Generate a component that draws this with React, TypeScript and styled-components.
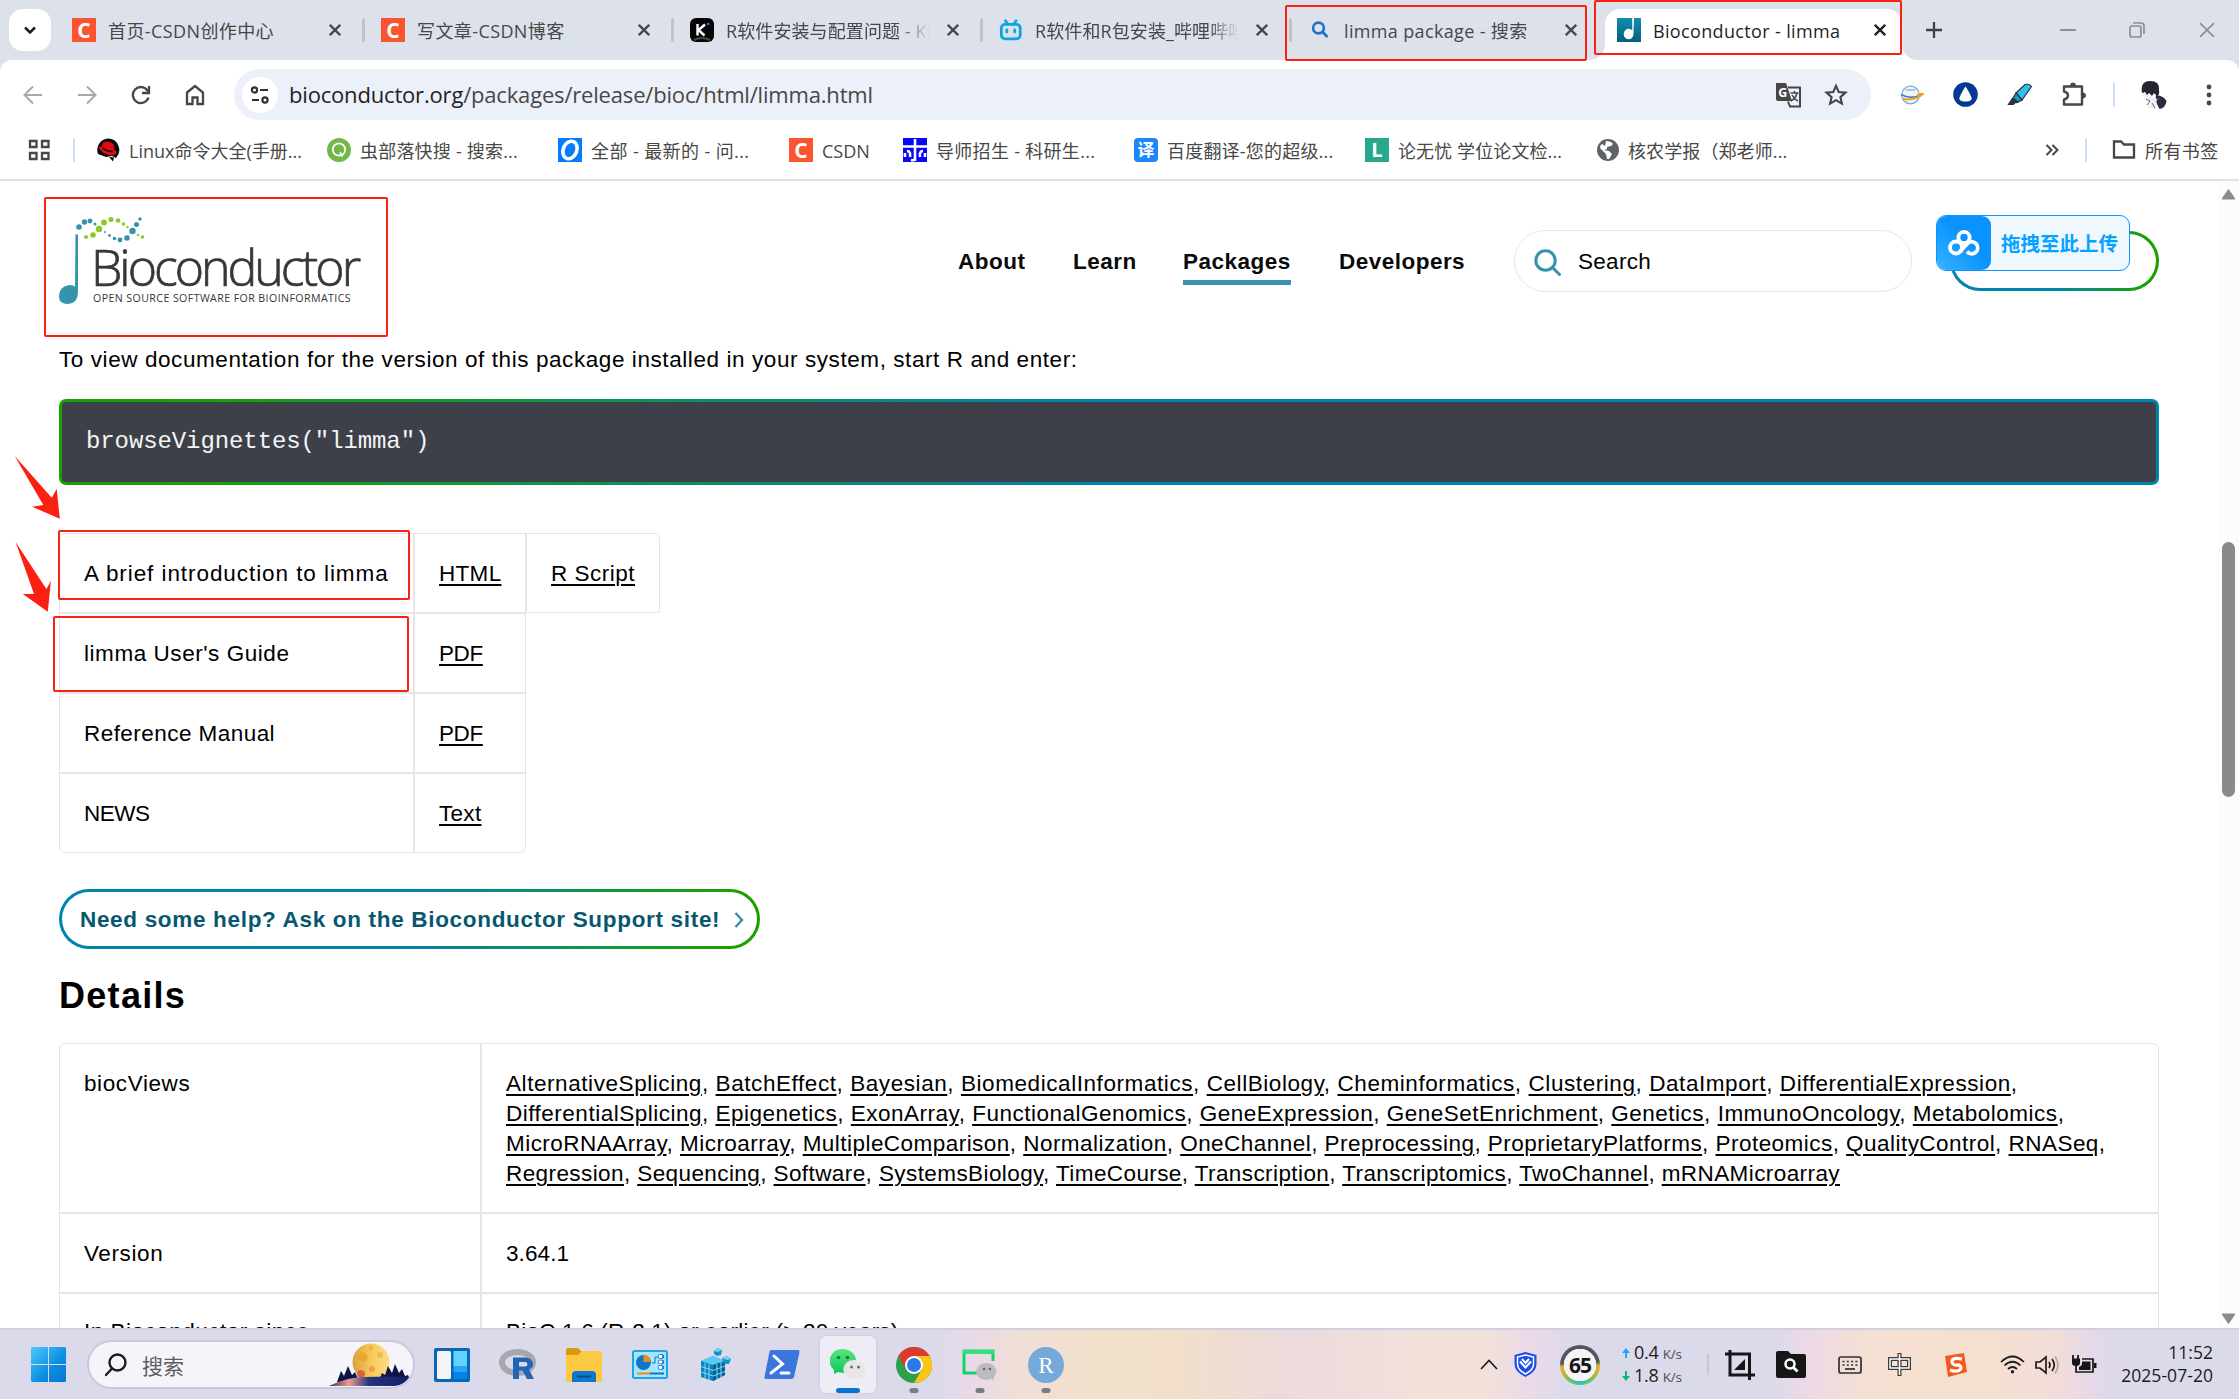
import React from "react";
import styled, { createGlobalStyle } from "styled-components";

const UI = `"Open Sans", "Noto Sans CJK SC", sans-serif`;
const SITE = `"Liberation Sans", "Noto Sans CJK SC", sans-serif`;
const RED = "#fb2112";

const Global = createGlobalStyle`
  * { box-sizing: border-box; }
  body { margin: 0; background: #fff; overflow: hidden; }
  svg { display: block; flex: none; }
`;

const Screen = styled.div`
  position: relative;
  display: flex;
  flex-direction: column;
  width: 2239px;
  height: 1399px;
  overflow: hidden;
  font-family: ${UI};
`;

/* ---------- browser tab strip ---------- */
const TabStrip = styled.div`
  display: flex;
  align-items: center;
  height: 60px;
  padding-left: 9px;
  background: #dde1e9;
`;
const TabSearch = styled.div`
  display: grid;
  place-items: center;
  width: 42px;
  height: 42px;
  border-radius: 14px;
  background: #fff;
`;
const Tab = styled.div<{ $active?: boolean; $first?: boolean }>`
  position: relative;
  display: flex;
  align-items: center;
  width: ${(p) => (p.$active ? 297 : 309)}px;
  height: ${(p) => (p.$active ? 51 : 42)}px;
  align-self: ${(p) => (p.$active ? "flex-end" : "center")};
  margin-left: ${(p) => (p.$first ? 5 : p.$active ? 4 : 0)}px;
  padding-left: ${(p) => (p.$active ? 12 : 16)}px;
  padding-bottom: ${(p) => (p.$active ? 9 : 0)}px;
  border-radius: 15px 15px 0 0;
  background: ${(p) => (p.$active ? "#fff" : "transparent")};
  color: ${(p) => (p.$active ? "#1f1f1f" : "#45474a")};
  &::before, &::after {
    content: "";
    display: ${(p) => (p.$active ? "block" : "none")};
    position: absolute;
    bottom: 0;
    width: 15px;
    height: 15px;
  }
  &::before { left: -15px; background: radial-gradient(circle at 0 0, transparent 14.5px, #fff 15px); }
  &::after { right: -15px; background: radial-gradient(circle at 100% 0, transparent 14.5px, #fff 15px); }
`;
const TabTitle = styled.div<{ $ls?: number; $fade?: boolean }>`
  flex: none;
  width: 206px;
  margin-left: 12px;
  padding-top: 2px;
  overflow: hidden;
  white-space: nowrap;
  font-size: 18px;
  line-height: 30px;
  letter-spacing: ${(p) => p.$ls ?? 0}px;
  mask-image: ${(p) => (p.$fade ? "linear-gradient(90deg, #000 172px, transparent 204px)" : "none")};
`;
const TabClose = styled.div`
  width: 24px;
  margin-left: 9px;
  margin-right: 1px;
  display: grid;
  place-items: center;
`;
const TabRule = styled.i`
  width: 3px;
  height: 24px;
  margin-left: 14px;
  border-radius: 2px;
  background: #c3c3c3;
`;
const StripButton = styled.div<{ $ml: number }>`
  display: grid;
  place-items: center;
  width: 24px;
  height: 24px;
  margin-left: ${(p) => p.$ml}px;
`;

/* ---------- toolbar ---------- */
const ToolbarBack = styled.div`
  background: #dde1e9;
`;
const Toolbar = styled.div`
  display: flex;
  align-items: center;
  height: 69px;
  border-radius: 12px 12px 0 0;
  background: #fff;
  padding-left: 18px;
`;
const NavIcon = styled.div`
  display: grid;
  place-items: center;
  width: 30px;
  margin-right: 24px;
`;
const Omnibox = styled.div`
  display: flex;
  align-items: center;
  width: 1637px;
  height: 51px;
  padding-left: 8px;
  border-radius: 26px;
  background: #ecf0f9;
`;
const SiteInfo = styled.div`
  display: grid;
  place-items: center;
  width: 36px;
  height: 36px;
  border-radius: 50%;
  background: #fff;
`;
const Url = styled.div`
  flex: 1;
  margin-left: 11px;
  padding-bottom: 1px;
  font-size: 22px;
  letter-spacing: -0.18px;
  color: #474747;
  b { font-weight: 400; color: #1f1f1f; }
`;
const Slot = styled.div<{ $w: number }>`
  display: grid;
  place-items: center;
  width: ${(p) => p.$w}px;
`;
const BlueRule = styled.i<{ $ml?: number; $mr?: number }>`
  width: 2px;
  height: 24px;
  margin-left: ${(p) => p.$ml ?? 0}px;
  margin-right: ${(p) => p.$mr ?? 0}px;
  background: #cfdef7;
`;

/* ---------- bookmarks ---------- */
const Bookmarks = styled.div`
  display: flex;
  align-items: center;
  height: 52px;
  padding: 0 18px 9px 28px;
  border-bottom: 2px solid #e1e2e4;
  background: #fff;
`;
const Bookmark = styled.div<{ $w: number; $ls?: number }>`
  display: flex;
  align-items: center;
  gap: 9px;
  width: ${(p) => p.$w}px;
  white-space: nowrap;
  font-size: 18px;
  line-height: 24px;
  letter-spacing: ${(p) => p.$ls ?? 0.2}px;
  color: #474747;
`;
const BookmarkName = styled.span`
  padding-top: 2px;
`;
const Tile = styled.span<{ $bg: string; $r?: number; $size?: number }>`
  display: grid;
  place-items: center;
  flex: none;
  width: 24px;
  height: 24px;
  border-radius: ${(p) => p.$r ?? 0}px;
  background: ${(p) => p.$bg};
  color: #fff;
  font: 700 ${(p) => p.$size ?? 20}px/24px ${UI};
  letter-spacing: 0;
`;
const Grow = styled.div`flex: 1;`;

/* ---------- web page ---------- */
const Viewport = styled.div`
  display: flex;
  height: 1147px;
  overflow: hidden;
  background: #fff;
`;
const Page = styled.main`
  width: 2218px;
  padding: 0 59px;
  font-family: ${SITE};
  font-size: 22.5px;
  line-height: 30px;
  color: #000;
`;
const SiteHeader = styled.header`
  display: flex;
  align-items: flex-start;
  height: 164px;
`;
const LogoBox = styled.div`
  display: flex;
  width: 899px;
  padding-top: 33px;
`;
const LogoText = styled.div`
  display: flex;
  flex-direction: column;
  margin-left: -60px;
  color: #383637;
  white-space: nowrap;
`;
const LogoName = styled.div`
  margin-top: 20px;
  font: 300 50px/66px ${UI};
  letter-spacing: -3px;
  -webkit-text-stroke: 0.7px #383637;
`;
const LogoTag = styled.div`
  margin: -9px 0 0 2px;
  font: 500 10.6px/14px ${UI};
  letter-spacing: 0.42px;
`;
const NavLinks = styled.nav`
  display: flex;
  gap: 48px;
  padding-top: 66px;
  width: 556px;
`;
const NavLink = styled.a<{ $w: number; $current?: boolean }>`
  width: ${(p) => p.$w}px;
  height: 38px;
  font-weight: 700;
  white-space: nowrap;
  letter-spacing: 0.48px;
  color: #0a0a0a;
  border-bottom: ${(p) => (p.$current ? "5px solid #3792ad" : "none")};
`;
const SearchField = styled.div`
  display: flex;
  align-items: center;
  gap: 17px;
  width: 398px;
  height: 62px;
  margin-top: 49px;
  padding: 2px 0 0 19px;
  border: 1px solid #e7e7e7;
  border-radius: 31px;
  letter-spacing: 0.3px;
`;
const GradientPill = styled.div<{ $w: number }>`
  display: flex;
  align-items: center;
  width: ${(p) => p.$w}px;
  height: 60px;
  border: 3px solid transparent;
  border-radius: 30px;
  background:
    linear-gradient(#fff, #fff) padding-box,
    linear-gradient(90deg, #0085af 50%, #1aa100 95%) border-box;
`;
const StartPill = styled(GradientPill)`
  margin: 50px 0 0 38px;
`;
const Paragraph = styled.p`
  margin: 0;
  letter-spacing: 0.58px;
`;
const Code = styled.pre`
  display: flex;
  align-items: center;
  height: 86px;
  margin: 24px 0 48px;
  padding: 0 24px;
  border: 3px solid transparent;
  border-radius: 7px;
  background:
    linear-gradient(#3d4049, #3d4049) padding-box,
    linear-gradient(90deg, #1aa100 5%, #0085af 50%) border-box;
  font: 24px/30px "Liberation Mono", monospace;
  letter-spacing: -0.1px;
  color: #f4f4f4;
`;
const Row = styled.div`
  display: flex;
  align-items: stretch;
`;
const Cell = styled.div<{ $w?: number; $corner?: string; $ls?: number; $top?: number }>`
  width: ${(p) => (p.$w ? `${p.$w}px` : "auto")};
  flex: ${(p) => (p.$w ? "none" : 1)};
  min-height: 80px;
  padding: ${(p) => p.$top ?? 25}px 24px 23px;
  border: 1px solid #e5e5e5;
  border-radius: ${(p) => p.$corner ?? "0"};
  white-space: nowrap;
  letter-spacing: ${(p) => p.$ls ?? 0}px;
`;
const Link = styled.a`
  color: #000;
  text-decoration: underline;
  text-decoration-thickness: 2px;
  text-underline-offset: 3px;
`;
const LinkLine = styled.div<{ $ls: number }>`
  letter-spacing: ${(p) => p.$ls}px;
`;
const HelpPill = styled(GradientPill)`
  margin-top: 36px;
  padding: 1px 0 0 18px;
  gap: 14px;
  font-weight: 700;
  letter-spacing: 0.68px;
  white-space: nowrap;
  color: #07576f;
`;
const Heading = styled.h2`
  margin: 25px 0;
  font-size: 36px;
  line-height: 44px;
  font-weight: 700;
  letter-spacing: 1.3px;
`;
const Scrollbar = styled.div`
  display: flex;
  flex-direction: column;
  align-items: center;
  width: 21px;
  padding: 7px 0 3px;
  background: #fcfcfc;
`;
const Thumb = styled.div`
  width: 13px;
  height: 255px;
  margin-top: 342px;
  border-radius: 7px;
  background: #8a8a8a;
`;

/* ---------- things lying over the page ---------- */
const Marker = styled.div<{ $x: number; $y: number; $w: number; $h: number }>`
  position: absolute;
  left: ${(p) => p.$x}px;
  top: ${(p) => p.$y}px;
  width: ${(p) => p.$w}px;
  height: ${(p) => p.$h}px;
  border: 2px solid ${RED};
  border-radius: 2px;
`;
const Arrows = styled.svg`
  position: absolute;
  left: 0;
  top: 440px;
`;
const UploadBadge = styled.div`
  position: absolute;
  left: 1936px;
  top: 215px;
  display: flex;
  align-items: center;
  width: 194px;
  height: 56px;
  border: 1px solid #0d94ff;
  border-radius: 10px;
  background: #eff7ff;
  color: #06a2ff;
  font: 700 19.5px/30px "Noto Sans CJK SC", sans-serif;
`;
const UploadIcon = styled.div`
  display: grid;
  place-items: center;
  width: 54px;
  height: 54px;
  margin-right: 10px;
  border-radius: 9px;
  background: linear-gradient(45deg, #35b4ff, #0a93ff 55%);
`;

/* ---------- taskbar ---------- */
const Taskbar = styled.div`
  display: flex;
  align-items: center;
  height: 71px;
  padding: 0 26px 0 31px;
  border-top: 2px solid #d3cedd;
  background: linear-gradient(
    90deg,
    #dbdaea 930px, #e9d9e8 970px, #f0dfd6 1020px, #f2e1ca 1100px, #f1dfca 1180px, #ecdadd 1290px,
    #f2e0dc 1400px, #f3e2d8 1480px, #ead9e8 1535px, #dbdaea 1570px, #dbdaea 1775px,
    #ecd9e7 1805px, #f5e0d3 1870px, #f5e0cf 1980px, #f2dcda 2060px, #e4d8e9 2095px, #dbdaea 2130px
  );
`;
const TaskSearch = styled.div`
  display: flex;
  align-items: center;
  width: 328px;
  height: 49px;
  margin: 0 19px 0 21px;
  padding: 0 2px 0 16px;
  border: 2px solid #cbc8da;
  border-radius: 25px;
  background: #f5f4fa;
  font-size: 21px;
  color: #5c5b60;
  overflow: hidden;
`;
const SearchLabel = styled.span`
  flex: 1;
  margin-left: 15px;
`;
const TaskApp = styled.div<{ $w?: number; $on?: boolean; $dot?: boolean }>`
  position: relative;
  display: grid;
  place-items: center;
  width: ${(p) => p.$w ?? 56}px;
  height: 57px;
  margin-right: 10px;
  border-radius: 6px;
  background: ${(p) => (p.$on ? "#eeedf6" : "transparent")};
  box-shadow: ${(p) => (p.$on ? "0 0 0 1px #d3d0e0" : "none")};
  &::after {
    content: "";
    position: absolute;
    bottom: 0;
    left: 50%;
    width: ${(p) => (p.$on ? 24 : 9)}px;
    height: 5px;
    transform: translateX(-50%);
    border-radius: 3px;
    display: ${(p) => (p.$on || p.$dot ? "block" : "none")};
    background: ${(p) => (p.$on ? "#0a74d6" : "#7d7a84")};
  }
`;
const Tray = styled.div`
  display: flex;
  align-items: center;
  margin-left: auto;
`;
const Gauge = styled.div`
  display: grid;
  place-items: center;
  width: 40px;
  height: 40px;
  border-radius: 50%;
  background:
    radial-gradient(circle, #f4f3f6 16px, transparent 16.5px),
    conic-gradient(#55565c 0 80deg, #d8b02a 90deg 110deg, #63c466 150deg, #35c3b8 180deg, #63c466 210deg, #d8b02a 250deg 265deg, #55565c 275deg);
  font: 700 21px/24px ${UI};
  letter-spacing: -1px;
  color: #17171a;
`;
const Speeds = styled.div`
  display: flex;
  flex-direction: column;
  width: 80px;
  font-size: 18px;
  line-height: 21px;
  letter-spacing: -0.3px;
  color: #1d1d20;
  small { font-size: 13.5px; color: #4b4b50; }
`;
const SpeedRow = styled.div`
  display: flex;
  align-items: center;
  gap: 4px;
`;
const Clock = styled.div`
  width: 110px;
  padding-bottom: 2px;
  text-align: right;
  white-space: nowrap;
  font-size: 17.5px;
  line-height: 23px;
  letter-spacing: 0.05px;
  color: #1b1b1e;
`;

/* ---------- icons ---------- */
const Cross = ({ c = "#45474a", s = 12, w = 2.3 }: { c?: string; s?: number; w?: number }) => (
  <svg width={s} height={s} viewBox="0 0 12 12" stroke={c} strokeWidth={w}><path d="M.8.8l10.4 10.4M11.2.8L.8 11.2" /></svg>
);
const Kimi = () => (
  <svg width="24" height="24" viewBox="0 0 24 24"><rect width="24" height="24" rx="6" fill="#050505" /><path d="M4 22q8-4 16 0" stroke="#777" strokeWidth="2" fill="none" opacity=".6" /><path d="M7.500 6v11.500M15 6.500L8.500 12l6 5.500" stroke="#fff" strokeWidth="2.400" fill="none" /><circle cx="18.200" cy="6" r="1.300" fill="#1b83ff" /></svg>
);
const Bili = () => (
  <svg width="24" height="24" viewBox="0 0 26 24" fill="none" stroke="#08a6e4" strokeWidth="3" strokeLinecap="round"><rect x="2.500" y="6" width="20.500" height="15.500" rx="4" /><path d="M7 2l2.500 3.500M18.500 2L16 5.500M8.500 12v2.200M17 12v2.200" /></svg>
);
const Bing = () => (
  <svg width="24" height="24" viewBox="0 0 24 24" fill="none" stroke="#1b73c9" strokeWidth="2.600"><circle cx="10.500" cy="10" r="5.400" /><path d="M13.500 13l6 6" /></svg>
);
const NoteIcon = () => (
  <svg width="24" height="24" viewBox="0 0 24 24"><defs><linearGradient id="bn" x1="0" y1="0" x2="0" y2="1"><stop offset="0" stopColor="#0e8fb0" /><stop offset="1" stopColor="#085e78" /></linearGradient></defs><rect width="24" height="24" fill="url(#bn)" /><path d="M15.200 0h1.800l-.5 15.500a4.900 5.200 0 1 1-1.200-2.900z" fill="#fff" /></svg>
);
const RedHat = () => (
  <svg width="24" height="24" viewBox="0 0 24 24"><path d="M12 .5a11.500 11.500 0 0 1 8 19.500l-4-2-6 1-8-3A11.500 11.500 0 0 1 12 .5z" fill="#0a0a0a" /><path d="M7 5q3-3 9 0 3 1.500 2 7 4 1 2 4-5 3-12-1-6-4-5-6 2-1 3 0z" fill="#df0a16" /><path d="M7 10q4 4 10 3.500" stroke="#0a0a0a" strokeWidth="1.600" fill="none" /><path d="M13 19l5 .5-1 4z" fill="#0a0a0a" /></svg>
);
const GreenQ = () => (
  <svg width="24" height="24" viewBox="0 0 24 24"><circle cx="12" cy="12" r="12" fill="#72b749" /><g fill="none" stroke="#fff" strokeWidth="1.800"><circle cx="12" cy="11.500" r="6.200" /><path d="M13 14.500l2.500 4" /></g></svg>
);
const BlueO = () => (
  <svg width="24" height="24" viewBox="0 0 24 24"><rect width="24" height="24" fill="#067bfb" /><ellipse cx="12" cy="12" rx="6.800" ry="9" transform="rotate(22 12 12)" fill="none" stroke="#fff" strokeWidth="3.600" /></svg>
);
const Mu = () => (
  <svg width="24" height="24" viewBox="0 0 24 24"><rect width="24" height="24" fill="#0808f6" /><g stroke="#fff" strokeWidth="2.600" fill="none"><path d="M0 8.500h24M12 1v22M8 22q4 1 4-2M4 13q4 0 3 6M20 13q-4 0-3 6M2 15v4M22 15v4" /></g></svg>
);
const Globe = () => (
  <svg width="22" height="22" viewBox="0 0 22 22"><circle cx="11" cy="11" r="11" fill="#5e6367" /><path d="M9 2q5 0 7 3l-2 2-4 1v2l-3 1 5 1 3 3-3 5h-2l-1-5-6-6q0-3 2-4l3 2z" fill="#fff" /></svg>
);
const Translate = () => (
  <svg width="27" height="26" viewBox="0 0 27 26"><path d="M1 1h10l6 18H3q-2 0-2-2z" fill="#474747" /><path d="M13 5.500h12v19H15l-2-5" fill="none" stroke="#474747" strokeWidth="2" /><text x="3.200" y="15" fontSize="12.500" fontWeight="700" fontFamily="Open Sans" fill="#fff">G</text><path d="M15.500 11h8M19.500 9v2M22 11q-1 5-6 8M17 13q2 4 6 6" fill="none" stroke="#474747" strokeWidth="1.500" /></svg>
);
const Star = () => (
  <svg width="24" height="24" viewBox="0 0 24 24" fill="none" stroke="#454545" strokeWidth="2.100"><path d="M12 2.800l2.700 6.200 6.800.6-5.100 4.500 1.500 6.600-5.900-3.500-5.900 3.500 1.500-6.600L2.500 9.600 9.300 9z" /></svg>
);
const Ball = () => (
  <svg width="24" height="20" viewBox="0 0 24 20" fill="none"><circle cx="10.500" cy="10" r="8.800" fill="#edf4fa" stroke="#7da9d2" strokeWidth="1.200" /><path d="M6 5h9" stroke="#87aed3" strokeWidth="1.300" /><path d="M1 9.500q11 6 21-.5" stroke="#3c7fbf" strokeWidth="1.500" /><path d="M3 14q12 2 20-5-4-1-6 2" stroke="#f0a02e" strokeWidth="2" /></svg>
);
const NavyMark = () => (
  <svg width="25" height="25" viewBox="0 0 25 25"><circle cx="12.500" cy="12.500" r="12.300" fill="#053a93" /><path d="M12.500 4.500C10 8 8 12 6.500 15.500 5.800 18 8 19.500 12.500 19.500s6.700-1.500 6-4C17 12 15 8 12.500 4.500z" fill="#fff" /></svg>
);
const Pen = () => (
  <svg width="26" height="24" viewBox="0 0 26 24" stroke="#26323c" strokeWidth="1.200"><path d="M9 10L18 1.500q5-1 6.500 2L15 17z" fill="#2cc0ea" /><path d="M9 10l6 7-4 2-5-4z" fill="#189bbd" /><path d="M5.500 15.500l5 4-3 .500-1 1.500H1.500z" fill="#333" /></svg>
);
const Puzzle = () => (
  <svg width="26" height="26" viewBox="0 0 26 26" fill="none" stroke="#474747" strokeWidth="2.400" strokeLinejoin="round"><path d="M3 4.500h18v18H3v-5q4-1 4-4t-4-4z" /><path d="M9.500 3.500a2.500 2.500 0 0 1 5 0zM22 11a2.500 2.500 0 0 1 0 5z" fill="#474747" strokeWidth="1" /></svg>
);
const Avatar = () => (
  <svg width="28" height="30" viewBox="0 0 28 30"><path d="M16 15q8 1 10.500 6-1 7-7 8l-4-8z" fill="#2a2c47" /><path d="M3 12q-1 7 4 10l1 6h8l1-9z" fill="#f1f0f2" /><path d="M2 13Q0 1 10 1t9 9q1 5-2 6l-3-3-2 3-3-3-2 2-2-3z" fill="#27242f" /><path d="M6 19l4 2-3 4M12 23l3 5M19 18l-3 4" stroke="#6d6a78" fill="none" /></svg>
);
const Dna = () => {
  const blue = [[79, 227, 2.8], [84.5, 222, 2.7], [90, 221, 2.4], [95, 224, 1.5], [105, 232, 1], [109.5, 235.5, 1.4], [114.5, 238.5, 1.8], [120, 240, 2.4], [127, 238, 2.8], [132.5, 231, 3.2], [136.5, 224.5, 2.5], [140, 219, 1.8]];
  const green = [[86, 237, 2], [93, 235, 2.8], [99, 229, 3.2], [104, 222.5, 2.9], [111, 219.5, 2.5], [118, 220.5, 2.3], [123.5, 224, 1.8], [127.5, 227, 1.2], [138, 235, 1.2], [142.5, 237, 1.8]];
  return (
    <svg width="92" height="96" viewBox="59 214 92 96">
      {blue.map(([x, y, r]) => <circle key={x} cx={x} cy={y} r={r} fill="#3792ad" />)}
      {green.map(([x, y, r]) => <circle key={x} cx={x} cy={y} r={r} fill="#87cb24" />)}
      <path d="M75.500 234l2.500 1v57q0 11-10 12-9 0-9-7 0-11 11-12 4 0 5 2z" fill="#3792ad" />
    </svg>
  );
};
const Magnifier = () => (
  <svg width="27" height="27" viewBox="0 0 27 27" fill="none" stroke="#3792ad" strokeWidth="3" strokeLinecap="round"><circle cx="11.500" cy="11.500" r="9.700" /><path d="M18.500 18.500l7 7" /></svg>
);
const Netdisk = () => (
  <svg width="32" height="26" viewBox="0 0 32 26" fill="none" stroke="#fff" strokeWidth="3.800"><circle cx="16" cy="7.500" r="5.600" /><circle cx="8" cy="17.500" r="6" /><path d="M19 21.500a6 6 0 1 0 1-8.500l-8.500 9" /></svg>
);
const Windows = () => (
  <svg width="35" height="35" viewBox="0 0 35 35"><defs><linearGradient id="win" x1="0" y1="0" x2="1" y2="1"><stop offset="0" stopColor="#4cc9fb" /><stop offset=".6" stopColor="#0c8ce0" /><stop offset="1" stopColor="#0678d4" /></linearGradient></defs><path d="M0 1.500Q0 0 1.500 0H17v17H0zM18 0h15.500Q35 0 35 1.500V17H18zM0 18h17v17H1.500Q0 35 0 33.500zM18 18h17v15.500q0 1.500-1.500 1.500H18z" fill="url(#win)" /></svg>
);
const MoonScene = () => (
  <svg width="82" height="45" viewBox="0 0 82 45"><defs><linearGradient id="mo" x1="0" y1="0" x2="1" y2="0"><stop offset="0" stopColor="#d9a13c" /><stop offset=".5" stopColor="#f8ca58" /><stop offset="1" stopColor="#fbdd83" /></linearGradient><linearGradient id="hill" x1="0" y1="0" x2="1" y2="0"><stop offset="0" stopColor="#3a3560" /><stop offset=".25" stopColor="#eb9a90" /><stop offset=".5" stopColor="#26347e" /><stop offset="1" stopColor="#101e66" /></linearGradient></defs><circle cx="42" cy="20" r="18.500" fill="url(#mo)" /><circle cx="34" cy="15" r="4.500" fill="#eaa52f" /><circle cx="51" cy="13" r="3" fill="#eebc57" /><circle cx="42" cy="6" r="2.300" fill="#e9b044" /><circle cx="43" cy="27" r="3" fill="#ef9f4a" /><circle cx="32" cy="32" r="4" fill="#d9633f" /><path d="M8 40l4-11 3 5 4-10 4 9 3-3 4 9zM50 38l3-7 3 2 3-9 4 7 3-9 4 9 3-4 3 7 3-1 2 5z" fill="#0b1547" /><path d="M0 44q18-9 36-9 24-1 44 0-2 8-14 9z" fill="url(#hill)" /></svg>
);
const WidgetsIcon = () => (
  <svg width="36" height="34" viewBox="0 0 36 34"><rect width="36" height="34" rx="2" fill="#0667bd" /><rect x="3" y="3" width="14" height="28" rx="1.500" fill="#f5f5f5" /><path d="M19.500 3H33v15H19.500z" fill="#62d3fe" /><path d="M19.500 18H33v6H19.500z" fill="#28a5f6" /><path d="M19.500 24H33v7H19.500z" fill="#0882e8" /></svg>
);
const RLogo = () => (
  <svg width="38" height="32" viewBox="0 0 38 32"><ellipse cx="18.500" cy="13.500" rx="15.500" ry="10.500" fill="none" stroke="#a6a8ae" strokeWidth="6" /><path d="M14 8.500h13q7 1 7 6.500 0 4-4 5.500l5 9.500h-7l-4.500-8.500H20V30h-6z" fill="#2265b8" /><path d="M20 13h6q2.500 0 2.500 2.300T26 17.500h-6z" fill="#dbdaea" /></svg>
);
const FolderIcon = () => (
  <svg width="36" height="34" viewBox="0 0 36 34"><path d="M0 2q0-2 2-2h10l4 4h18q2 0 2 2v8H0z" fill="#d99b0d" /><path d="M0 7h12l4-4h18q2 0 2 2v29H0z" fill="#fdc941" /><path d="M6 34v-7q0-4 4-4h16q4 0 4 4v7z" fill="#0d76cf" /><path d="M11 28.500h14" stroke="#084b8e" strokeWidth="1.800" /></svg>
);
const PanelIcon = () => (
  <svg width="36" height="29" viewBox="0 0 36 29"><rect x="1" y="1" width="34" height="27" rx="1.500" fill="#a6e5fb" stroke="#1ea5e6" strokeWidth="2" /><circle cx="11.500" cy="12.500" r="7.500" fill="#0e76c8" /><path d="M11.500 12V4.500q6 0 7 7.500z" fill="#f28b12" /><path d="M20 13h3V7h3" fill="none" stroke="#1773b9" /><g stroke="#0e76c8" strokeWidth="4.400" strokeLinecap="round"><path d="M28 6.500h2M28 12h2M28 17.500h2" /></g><g stroke="#fff" strokeWidth="2.800" strokeLinecap="round"><path d="M28 6.500h1M28 12h1M28 17.500h1" /></g><path d="M5 23.500h13" stroke="#f28b12" strokeWidth="2" /><path d="M18 23.500h14" stroke="#0e76c8" strokeWidth="2" /></svg>
);
const CubeIcon = () => (
  <svg width="32" height="34" viewBox="0 0 32 34"><path d="M1 13l12-5 12 5v14l-12 6-12-4z" fill="#0c84bf" /><path d="M1 13l12-5 12 5-12 4z" fill="#53cdf4" /><path d="M13 17v16l12-6V13z" fill="#0a5f92" /><path d="M5 15v15M9 16v16M1 18.500l12 4 12-4.500M1 24l12 4 12-4.500M17 16v15M21 14v15" stroke="#7bdcf9" strokeWidth="1" fill="none" /><path d="M14 3l4-3 4 2-1 5-4 1-3-2z" fill="#1690c6" /><path d="M22 10l5-2 4 3-2 5-5 0z" fill="#1690c6" /><path d="M14 3l4-3 4 2-4 2zM22 10l5-2 4 3-4 1z" fill="#68d6f6" /></svg>
);
const ShellIcon = () => (
  <svg width="36" height="29" viewBox="0 0 36 29"><path d="M7 0h27q2 0 1.500 2L30 27q-.5 2-2.500 2H2Q0 29 .5 27L5.500 1.500Q6 0 7 0z" fill="#3b76dd" /><path d="M10 6l8.500 8L7 23M17 23h8" fill="none" stroke="#fff" strokeWidth="3" strokeLinecap="round" /></svg>
);
const WeChat = () => (
  <svg width="36" height="31" viewBox="0 0 36 31"><defs><linearGradient id="wc" x1="0" y1="0" x2="0" y2="1"><stop offset="0" stopColor="#58e87c" /><stop offset="1" stopColor="#0fc55a" /></linearGradient></defs><path d="M13 0a13 12 0 0 1 0 24l-5-1-4 2 0-4A13 12 0 0 1 13 0z" fill="url(#wc)" /><circle cx="8.500" cy="8.500" r="1.700" fill="#0c7a3d" /><circle cx="17.500" cy="8.500" r="1.700" fill="#0c7a3d" /><path d="M25 11a10.500 9.500 0 0 1 7 16.500l0 3-3.500-1.500A10.500 9.500 0 1 1 25 11z" fill="#e8e7e8" /><circle cx="21.500" cy="18" r="1.500" fill="#6d6d6d" /><circle cx="28.500" cy="18" r="1.500" fill="#6d6d6d" /></svg>
);
const Chrome = () => (
  <svg width="36" height="36" viewBox="0 0 36 36"><circle cx="18" cy="18" r="18" fill="#2ea04a" /><path d="M2.400 9A18 18 0 0 1 33.600 9H18L10.200 22.500z" fill="#dd3a2d" /><path d="M33.600 9A18 18 0 0 1 18 36l7.800-13.500L25.800 13.500 18 9z" fill="#fcc514" /><circle cx="18" cy="18" r="9" fill="#fff" /><circle cx="18" cy="18" r="7" fill="#2b7aea" /></svg>
);
const WeChatScreen = () => (
  <svg width="36" height="32" viewBox="0 0 36 32"><path d="M31 12V2H2v22h13" fill="none" stroke="#15d16c" strokeWidth="3" /><path d="M1 1h31v4H1z" fill="#35e078" /><path d="M25 14a9.500 8.500 0 0 1 7 14v3l-3-1.500A9.500 8.500 0 1 1 25 14z" fill="#bcbcc0" /><circle cx="22" cy="20" r="1.300" fill="#666" /><circle cx="28" cy="20" r="1.300" fill="#666" /></svg>
);
const RStudio = () => (
  <svg width="36" height="36" viewBox="0 0 36 36"><circle cx="18" cy="18" r="18" fill="#74a9da" /><text x="18" y="25.500" textAnchor="middle" fontFamily="Liberation Serif" fontSize="23" fill="#fff">R</text></svg>
);

const links: { ls: number; items: string[]; last?: boolean }[] = [
  { ls: 0.57, items: ["AlternativeSplicing", "BatchEffect", "Bayesian", "BiomedicalInformatics", "CellBiology", "Cheminformatics", "Clustering", "DataImport", "DifferentialExpression"] },
  { ls: 0.5, items: ["DifferentialSplicing", "Epigenetics", "ExonArray", "FunctionalGenomics", "GeneExpression", "GeneSetEnrichment", "Genetics", "ImmunoOncology", "Metabolomics"] },
  { ls: 0.46, items: ["MicroRNAArray", "Microarray", "MultipleComparison", "Normalization", "OneChannel", "Preprocessing", "ProprietaryPlatforms", "Proteomics", "QualityControl", "RNASeq"] },
  { ls: 0.41, items: ["Regression", "Sequencing", "Software", "SystemsBiology", "TimeCourse", "Transcription", "Transcriptomics", "TwoChannel", "mRNAMicroarray"], last: true },
];

const tabs = [
  { icon: <Tile $bg="#fb5430" $size={21}>C</Tile>, title: "首页-CSDN创作中心", ls: 0.4 },
  { icon: <Tile $bg="#fb5430" $size={21}>C</Tile>, title: "写文章-CSDN博客", ls: 0.4 },
  { icon: <Kimi />, title: "R软件安装与配置问题 - Kimi", fade: true, ls: 0.1 },
  { icon: <Bili />, title: "R软件和R包安装_哔哩哔哩", fade: true, ls: 0.1 },
  { icon: <Bing />, title: "limma package - 搜索", ls: 0.35 },
];

export default function App() {
  return (
    <>
      <Global />
      <Screen>
        <TabStrip>
          <TabSearch><svg width="12" height="9" viewBox="0 0 12 9"><path d="M1 1.500l5 5 5-5" fill="none" stroke="#1f1f1f" strokeWidth="2.500" /></svg></TabSearch>
          {tabs.map((t, i) => (
            <Tab key={t.title} $first={i === 0}>
              {t.icon}
              <TabTitle $ls={t.ls} $fade={t.fade}>{t.title}</TabTitle>
              <TabClose><Cross /></TabClose>
              {i < 4 && <TabRule />}
            </Tab>
          ))}
          <Tab $active>
            <NoteIcon />
            <TabTitle $ls={0.35}>Bioconductor - limma</TabTitle>
            <TabClose><Cross c="#1f1f1f" /></TabClose>
          </Tab>
          <StripButton $ml={20}><svg width="16" height="16" viewBox="0 0 16 16" stroke="#3f4043" strokeWidth="2.300"><path d="M8 0v16M0 8h16" /></svg></StripButton>
          <StripButton $ml={110}><svg width="16" height="2"><rect width="16" height="2" fill="#8b8d91" /></svg></StripButton>
          <StripButton $ml={45}><svg width="16" height="16" viewBox="0 0 16 16" fill="none" stroke="#8b8d91" strokeWidth="1.700"><rect x="1" y="4" width="11" height="11" rx="2" /><path d="M4 1h8q3 0 3 3v8" /></svg></StripButton>
          <StripButton $ml={46}><Cross c="#8b8d91" s={16} w={1.2} /></StripButton>
        </TabStrip>

        <ToolbarBack>
          <Toolbar>
            <NavIcon><svg width="20" height="20" viewBox="0 0 20 20" fill="none" stroke="#a7a8aa" strokeWidth="2"><path d="M19 10H2M10 1.500L1.500 10l8.500 8.500" /></svg></NavIcon>
            <NavIcon><svg width="20" height="20" viewBox="0 0 20 20" fill="none" stroke="#a7a8aa" strokeWidth="2"><path d="M1 10h17M10 1.500l8.500 8.500L10 18.500" /></svg></NavIcon>
            <NavIcon><svg width="20" height="20" viewBox="0 0 20 20" fill="none" stroke="#474747" strokeWidth="2.300"><path d="M17.500 12.500A8 8 0 1 1 16.500 5.500L18 7.500" /><path d="M18 1v7h-7" /></svg></NavIcon>
            <NavIcon><svg width="20" height="22" viewBox="0 0 20 22" fill="none" stroke="#474747" strokeWidth="2.300"><path d="M2 8.500L10 2l8 6.500V20h-5.500v-6.500h-5V20H2z" /></svg></NavIcon>
            <Omnibox>
              <SiteInfo><svg width="20" height="18" viewBox="0 0 20 18" fill="none" stroke="#303030" strokeWidth="2.200"><circle cx="4.500" cy="4" r="2.600" /><path d="M10 4h8M2 14h7" /><circle cx="15" cy="14" r="2.600" /></svg></SiteInfo>
              <Url><b>bioconductor.org</b>/packages/release/bioc/html/limma.html</Url>
              <Slot $w={48}><Translate /></Slot>
              <Slot $w={48}><Star /></Slot>
              <Slot $w={11} />
            </Omnibox>
            <Slot $w={14} />
            <Slot $w={53}><Ball /></Slot>
            <Slot $w={54}><NavyMark /></Slot>
            <Slot $w={55}><Pen /></Slot>
            <Slot $w={54}><Puzzle /></Slot>
            <BlueRule $ml={12} $mr={11} />
            <Slot $w={56}><Avatar /></Slot>
            <Slot $w={53}><svg width="6" height="22" viewBox="0 0 6 22" fill="#474747"><circle cx="3" cy="3" r="2.400" /><circle cx="3" cy="11" r="2.400" /><circle cx="3" cy="19" r="2.400" /></svg></Slot>
          </Toolbar>
        </ToolbarBack>

        <Bookmarks>
          <svg width="23" height="22" viewBox="0 0 23 22" fill="none" stroke="#474747" strokeWidth="2.300"><path d="M2 2h6.500v6H2zM14 2h6.500v6H14zM2 14h6.500v6H2zM14 14h6.500v6H14z" /></svg>
          <BlueRule $ml={22} $mr={21} />
          <Bookmark $w={231} $ls={0}><RedHat /><BookmarkName>Linux命令大全(手册...</BookmarkName></Bookmark>
          <Bookmark $w={231}><GreenQ /><BookmarkName>虫部落快搜 - 搜索...</BookmarkName></Bookmark>
          <Bookmark $w={231} $ls={0.4}><BlueO /><BookmarkName>全部 - 最新的 - 问...</BookmarkName></Bookmark>
          <Bookmark $w={114} $ls={0}><Tile $bg="#fb5430" $size={21}>C</Tile><BookmarkName>CSDN</BookmarkName></Bookmark>
          <Bookmark $w={231} $ls={0.3}><Mu /><BookmarkName>导师招生 - 科研生...</BookmarkName></Bookmark>
          <Bookmark $w={231}><Tile $bg="#1a88f8" $r={4} $size={17}>译</Tile><BookmarkName>百度翻译-您的超级...</BookmarkName></Bookmark>
          <Bookmark $w={232} $ls={0.1}><Tile $bg="#28a88b">L</Tile><BookmarkName>论无忧 学位论文检...</BookmarkName></Bookmark>
          <Bookmark $w={231} $ls={0.1}><Globe /><BookmarkName>核农学报（郑老师...</BookmarkName></Bookmark>
          <Grow />
          <svg width="14" height="12" viewBox="0 0 14 12" fill="none" stroke="#474747" strokeWidth="2"><path d="M1.500 1l5 5-5 5M7.500 1l5 5-5 5" /></svg>
          <BlueRule $ml={26} $mr={25} />
          <Bookmark $w={109} $ls={0.4}><svg width="24" height="19" viewBox="0 0 24 19" fill="none" stroke="#474747" strokeWidth="2.300"><path d="M2 17.500V1.500h7l3 3h10v13z" /></svg><BookmarkName>所有书签</BookmarkName></Bookmark>
        </Bookmarks>

        <Viewport>
          <Page>
            <SiteHeader>
              <LogoBox>
                <Dna />
                <LogoText>
                  <LogoName>Bioconductor</LogoName>
                  <LogoTag>OPEN SOURCE SOFTWARE FOR BIOINFORMATICS</LogoTag>
                </LogoText>
              </LogoBox>
              <NavLinks>
                <NavLink $w={67}>About</NavLink>
                <NavLink $w={62}>Learn</NavLink>
                <NavLink $w={108} $current>Packages</NavLink>
                <NavLink $w={127}>Developers</NavLink>
              </NavLinks>
              <SearchField><Magnifier />Search</SearchField>
              <StartPill $w={209} />
            </SiteHeader>

            <Paragraph>To view documentation for the version of this package installed in your system, start R and enter:</Paragraph>
            <Code>browseVignettes("limma")</Code>

            <Row>
              <Cell $w={355} $corner="6px 0 0 0" $ls={0.93}>A brief introduction to limma</Cell>
              <Cell $w={112} $ls={0.3}><Link>HTML</Link></Cell>
              <Cell $w={134} $corner="0 6px 0 0" $ls={0.5}><Link>R Script</Link></Cell>
            </Row>
            <Row>
              <Cell $w={355} $ls={0.55}>limma User's Guide</Cell>
              <Cell $w={112} $ls={-0.4}><Link>PDF</Link></Cell>
            </Row>
            <Row>
              <Cell $w={355} $ls={0.45}>Reference Manual</Cell>
              <Cell $w={112} $ls={-0.4}><Link>PDF</Link></Cell>
            </Row>
            <Row>
              <Cell $w={355} $corner="0 0 0 6px" $ls={-0.5}>NEWS</Cell>
              <Cell $w={112} $corner="0 0 6px 0" $ls={0.3}><Link>Text</Link></Cell>
            </Row>

            <HelpPill $w={701}>
              Need some help? Ask on the Bioconductor Support site!
              <svg width="10" height="16" viewBox="0 0 10 16" fill="none" stroke="#3792ad" strokeWidth="2.500"><path d="M1.500 1l6.500 7-6.500 7" /></svg>
            </HelpPill>

            <Heading>Details</Heading>

            <Row>
              <Cell $w={422} $corner="6px 0 0 0" $ls={0.6}>biocViews</Cell>
              <Cell $corner="0 6px 0 0">
                {links.map((l) => (
                  <LinkLine key={l.items[0]} $ls={l.ls}>
                    {l.items.map((t, i) => (
                      <React.Fragment key={t}><Link>{t}</Link>{l.last && i === l.items.length - 1 ? "" : ", "}</React.Fragment>
                    ))}
                  </LinkLine>
                ))}
              </Cell>
            </Row>
            <Row>
              <Cell $w={422} $ls={0.6}>Version</Cell>
              <Cell $ls={0.1}>3.64.1</Cell>
            </Row>
            <Row>
              <Cell $w={422} $top={23} $ls={0.5}>In Bioconductor since</Cell>
              <Cell $top={23} $ls={0.2}>BioC 1.6 (R-2.1) or earlier (&gt; 20 years)</Cell>
            </Row>
          </Page>
          <Scrollbar>
            <svg width="15" height="12" viewBox="0 0 15 12"><path d="M7.500 1.500L14 11H1z" fill="#8a8a8a" stroke="#8a8a8a" strokeLinejoin="round" /></svg>
            <Thumb />
            <Grow />
            <svg width="15" height="12" viewBox="0 0 15 12"><path d="M7.500 10.500L14 1H1z" fill="#8a8a8a" stroke="#8a8a8a" strokeLinejoin="round" /></svg>
          </Scrollbar>
        </Viewport>

        <Taskbar>
          <Windows />
          <TaskSearch>
            <svg width="22" height="24" viewBox="0 0 22 24" fill="none" stroke="#1d1d1f" strokeWidth="2.400" strokeLinecap="round"><circle cx="12.500" cy="9.500" r="8" /><path d="M7 15.500l-6 6.500" /></svg>
            <SearchLabel>搜索</SearchLabel>
            <MoonScene />
          </TaskSearch>
          <TaskApp $w={36}><WidgetsIcon /></TaskApp>
          <Slot $w={10} />
          <TaskApp><RLogo /></TaskApp>
          <TaskApp><FolderIcon /></TaskApp>
          <TaskApp><PanelIcon /></TaskApp>
          <TaskApp><CubeIcon /></TaskApp>
          <TaskApp><ShellIcon /></TaskApp>
          <TaskApp $on><WeChat /></TaskApp>
          <TaskApp $dot><Chrome /></TaskApp>
          <TaskApp $dot><WeChatScreen /></TaskApp>
          <TaskApp $dot><RStudio /></TaskApp>
          <Tray>
            <Slot $w={36}><svg width="18" height="11" viewBox="0 0 18 11" fill="none" stroke="#1d1d1f" strokeWidth="1.700"><path d="M1 10l8-8.500 8 8.500" /></svg></Slot>
            <Slot $w={36}><svg width="23" height="25" viewBox="0 0 23 25"><path d="M11.500 0l11 3v9q0 8-11 13Q.5 20 .5 12V3z" fill="#1f4ee8" /><path d="M11.500 3l8 2v7q0 6-8 10-8-4-8-10V5z" fill="none" stroke="#fff" strokeWidth="1.500" /><path d="M6 9.500l5.500 6 5.500-6M8 7l3.500 4L15 7" fill="none" stroke="#fff" strokeWidth="2" /></svg></Slot>
            <Slot $w={74}><Gauge>65</Gauge></Slot>
            <Slot $w={5} />
            <Speeds>
              <SpeedRow><svg width="8" height="10" viewBox="0 0 8 10"><path d="M4 0l4 5H5v5H3V5H0z" fill="#18a8f8" /></svg><span>0.4 <small>K/s</small></span></SpeedRow>
              <SpeedRow><svg width="8" height="10" viewBox="0 0 8 10"><path d="M4 10l4-5H5V0H3v5H0z" fill="#12b866" /></svg><span>1.8 <small>K/s</small></span></SpeedRow>
            </Speeds>
            <Slot $w={12}><svg width="2" height="21"><rect width="2" height="21" fill="#c8c6d4" /></svg></Slot>
            <Slot $w={51}><svg width="30" height="30" viewBox="0 0 30 30" fill="none" stroke="#161618" strokeWidth="3"><path d="M5 0v25h25M0 4h24.500v26" /><path d="M9 20L20 9v11z" fill="#161618" stroke="none" /></svg></Slot>
            <Slot $w={51}><svg width="30" height="27" viewBox="0 0 30 27"><path d="M0 2q0-2 2-2h10l3 3h13q2 0 2 2v20q0 2-2 2H2q-2 0-2-2z" fill="#161618" /><circle cx="14" cy="13" r="4.500" fill="none" stroke="#fff" strokeWidth="2.500" /><path d="M17.500 16.500l4 4" stroke="#fff" strokeWidth="2.800" /></svg></Slot>
            <Slot $w={67}><svg width="24" height="18" viewBox="0 0 24 18" fill="none" stroke="#303033" strokeWidth="1.700"><rect x="1" y="1" width="22" height="16" rx="2" /><path d="M4.500 5.500h15M4.500 9h15" strokeDasharray="2 2.300" /><path d="M7 13h10" /></svg></Slot>
            <Slot $w={33}><svg width="23" height="23" viewBox="0 0 23 23" fill="none"><path d="M2 6h19v9H2zM11.500 0v23" stroke="#3b3b3e" strokeWidth="4" /><path d="M2 6h19v9H2zM11.500 1v21" stroke="#fff" strokeWidth="1.500" /></svg></Slot>
            <Slot $w={80}><svg width="24" height="24" viewBox="0 0 24 24"><path d="M1 3L20 0l3 19-19 5z" fill="#f4581c" /><path d="M18 6Q8 4 8 8.500T15 12q4 3 0 5.500-4 1.500-9-.5" fill="none" stroke="#fff" strokeWidth="3.200" /></svg></Slot>
            <Slot $w={33}><svg width="25" height="19" viewBox="0 0 25 19" fill="none" stroke="#1d1d1f" strokeWidth="1.700"><path d="M1 7q11.500-11 23 0M4.500 10.500q8-7.500 16 0M8 14q4.500-4 9 0" /><circle cx="12.500" cy="16.800" r="1.700" fill="#1d1d1f" stroke="none" /></svg></Slot>
            <Slot $w={36}><svg width="24" height="20" viewBox="0 0 24 20" fill="none" stroke="#1d1d1f" strokeWidth="1.700"><path d="M1 7h4l6-5v16l-6-5H1zM14 7q2 3 0 6M17 4q4.500 6 0 12" /><path d="M20 1.500q6 8.500 0 17" stroke="#aaa" /></svg></Slot>
            <Slot $w={38}><svg width="25" height="19" viewBox="0 0 25 19"><path d="M1 0v4M6 0v4" stroke="#161618" strokeWidth="1.800" /><path d="M0 3.500h8V8q0 3-4 3t-4-3z" fill="#161618" /><path d="M4 10v7h17V4H10" fill="none" stroke="#161618" strokeWidth="1.700" /><path d="M10 6.500h8.500v8.500H7v-3q3-1 3-3zM22 8h2.500v5H22z" fill="#161618" /></svg></Slot>
            <Clock>11:52<br />2025-07-20</Clock>
          </Tray>
        </Taskbar>

        <Marker $x={1285} $y={5} $w={302} $h={56} />
        <Marker $x={1594} $y={0} $w={308} $h={55} />
        <Marker $x={44} $y={197} $w={344} $h={140} />
        <Marker $x={58} $y={530} $w={352} $h={70} />
        <Marker $x={53} $y={616} $w={356} $h={76} />
        <Arrows width="70" height="180" viewBox="0 440 70 180" fill={RED}>
          <path d="M14.700 456L51.800 497.700 56.700 488.700 59.800 518.700 32 506.700 43.300 505z" />
          <path d="M15.600 542L46.400 589 50.900 581 47.800 611.700 22.800 594 34 594z" />
        </Arrows>
        <UploadBadge>
          <UploadIcon><Netdisk /></UploadIcon>
          拖拽至此上传
        </UploadBadge>
      </Screen>
    </>
  );
}
